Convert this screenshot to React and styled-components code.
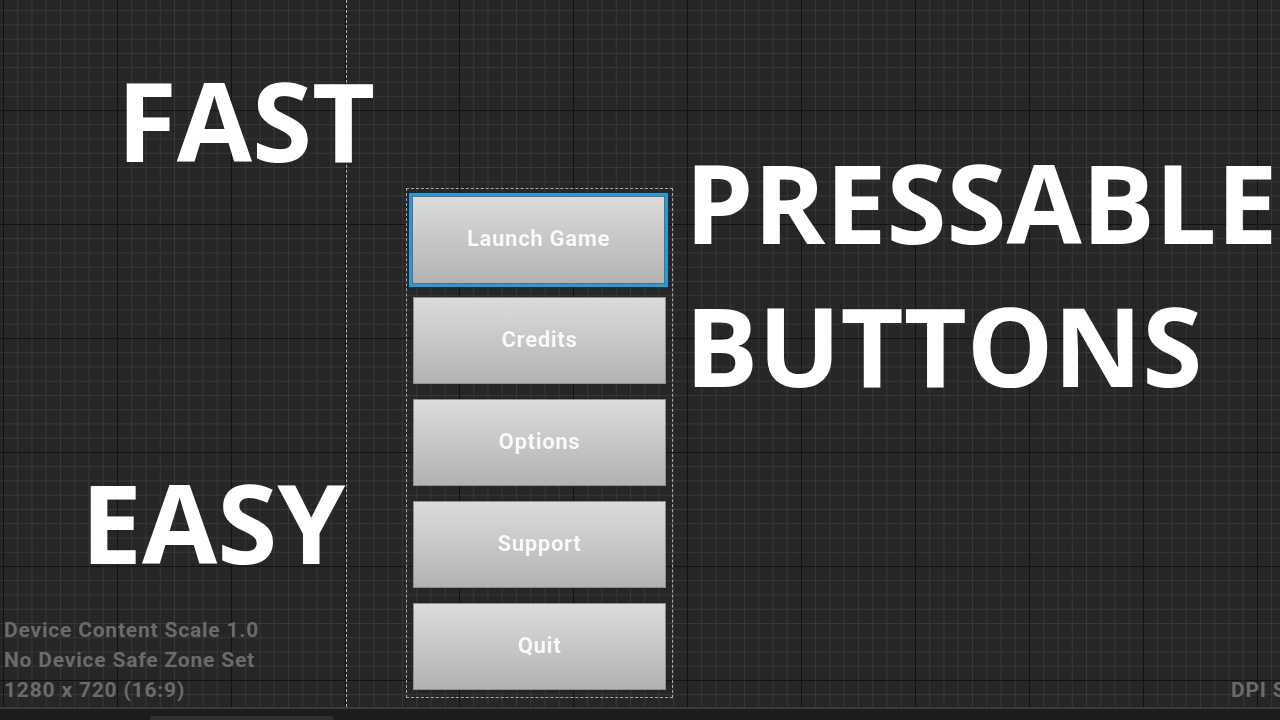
import React from 'react';
import styled, { createGlobalStyle } from 'styled-components';

const GlobalStyle = createGlobalStyle`
    html, body {
        margin: 0;
        padding: 0;
        background: #1d1d1d;
        overflow: hidden;
    }
`

const Page = styled.div`
    width: 1280px;
    height: 720px;
    display: flex;
    flex-direction: column;
    overflow: hidden;
`

// designer canvas with minor / major grid lines
const Canvas = styled.div`
    flex: 1;
    display: flex;
    min-height: 0;
    overflow: hidden;
    background-color: #262626;
    background-image:
        linear-gradient(to right, #121212 1px, transparent 1px),
        linear-gradient(to bottom, #121212 1px, transparent 1px),
        linear-gradient(to right, #383838 1px, transparent 1px),
        linear-gradient(to bottom, #383838 1px, transparent 1px);
    background-size: 114px 114px, 114px 114px, 14.25px 14.25px, 14.25px 14.25px;
    background-position: 3px -4px, 3px -4px, 3px -4px, 3px -4px;
`

const LeftZone = styled.div`
    width: 347px;
    flex-shrink: 0;
    display: flex;
    flex-direction: column;
    padding-top: 65px;
    padding-bottom: 2px;
    border-right: 1px dashed #b8b8b8;
    box-sizing: border-box;
`

const BigWord = styled.div`
    font-family: "Open Sans", "Liberation Sans", sans-serif;
    font-weight: 700;
    font-size: 109px;
    line-height: ${props => props.$lineHeight || '1'};
    color: #ffffff;
    white-space: nowrap;
    padding-left: ${props => props.$indent || 0}px;
    margin-top: ${props => props.$top || 0}px;
`

const InfoBlock = styled.div`
    margin-top: auto;
    padding-left: ${props => props.$indent || 4}px;
    font-family: Roboto, "Liberation Sans", sans-serif;
    font-weight: 700;
    font-size: 21px;
    letter-spacing: 0.8px;
    line-height: 30px;
    color: #6b6b6b;
    white-space: nowrap;
`

const Panel = styled.div`
    align-self: flex-start;
    margin: 188px 0 0 59px;
    padding: 6px 6px 7px;
    border: 1px dashed #a8a8a8;
    display: flex;
    flex-direction: column;
    gap: 15px;
    flex-shrink: 0;
`

const MenuButton = styled.button`
    width: 253px;
    height: 87px;
    box-sizing: border-box;
    border: 1px solid #8e8e8e;
    background: linear-gradient(to bottom, #dcdcdc, #b2b2b2);
    font-family: Roboto, "Liberation Sans", sans-serif;
    font-weight: 700;
    font-size: 22px;
    letter-spacing: 0.7px;
    color: #fafafa;
    text-shadow: 0 0 1px rgba(0, 0, 0, 0.15);
    cursor: pointer;
    padding: 0 0 3px;
    ${props => props.$hovered ? `
        width: 259px;
        height: 94px;
        margin: -2px -2px -5px -4px;
        border: 3px solid #1ba0df;
        box-shadow: inset 0 0 0 1px #6a6a6a;
    ` : ''}
`

const RightZone = styled.div`
    flex: 1;
    display: flex;
    flex-direction: column;
    padding-top: 130px;
    padding-left: 12px;
    padding-bottom: 2px;
    min-width: 0;
`

const BottomBar = styled.div`
    height: 13px;
    flex-shrink: 0;
    border-top: 2px solid #3a3a3a;
    background: #1c1c1c;
    box-sizing: border-box;
    display: flex;
    align-items: flex-end;
`

const BarTab = styled.div`
    width: 183px;
    height: 4px;
    margin-left: 150px;
    background: #2f2f2f;
    border-radius: 2px 2px 0 0;
`

const items = ['Launch Game', 'Credits', 'Options', 'Support', 'Quit']

export default function App() {
    return (
        <Page>
            <GlobalStyle />
            <Canvas>
                <LeftZone>
                    <BigWord $indent={117}>FAST</BigWord>
                    <BigWord $indent={81} $top={293}>EASY</BigWord>
                    <InfoBlock>
                        <div>Device Content Scale 1.0</div>
                        <div>No Device Safe Zone Set</div>
                        <div>1280 x 720 (16:9)</div>
                    </InfoBlock>
                </LeftZone>
                <Panel>
                    {items.map((label, i) => (
                        <MenuButton key={label} $hovered={i === 0}>{label}</MenuButton>
                    ))}
                </Panel>
                <RightZone>
                    <BigWord $lineHeight="143px">PRESSABLE<br />BUTTONS</BigWord>
                    <InfoBlock $indent={546}>DPI Scale 1.0</InfoBlock>
                </RightZone>
            </Canvas>
            <BottomBar>
                <BarTab />
            </BottomBar>
        </Page>
    )
}
